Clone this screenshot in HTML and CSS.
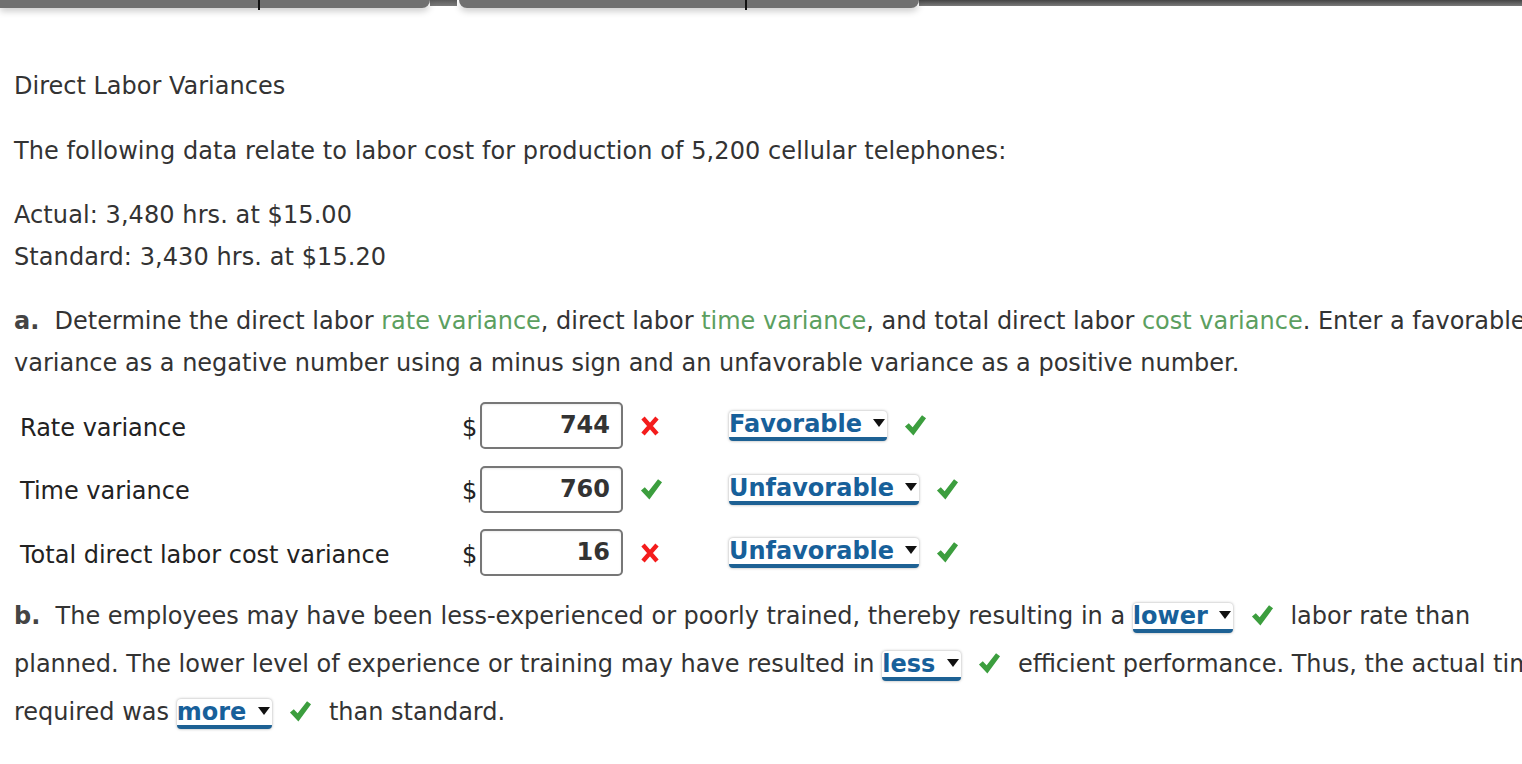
FILE: index.html
```html
<!DOCTYPE html>
<html>
<head>
<meta charset="utf-8">
<link rel="stylesheet" href="styles.css">
</head>
<body>
<div class="topbar">
  <div class="tab tab-first"><span class="tick tick-a"></span></div>
  <div class="joint"></div>
  <div class="tab tab-second"><span class="tick tick-b"></span></div>
  <div class="rail"></div>
</div>
<div class="content">
  <p class="title">Direct Labor Variances</p>
  <p class="para">The following data relate to labor cost for production of 5,200 cellular telephones:</p>
  <p class="para">Actual: 3,480 hrs. at $15.00<br>Standard: 3,430 hrs. at $15.20</p>
  <p class="para para-a"><b class="lead">a.</b>&nbsp; Determine the direct labor <span class="term">rate variance</span>, direct labor <span class="term">time variance</span>, and total direct labor <span class="term">cost variance</span>. Enter a favorable variance as a negative number using a minus sign and an unfavorable variance as a positive number.</p>

  <div class="answers">
    <div class="row">
      <div class="label">Rate variance</div>
      <div class="dollar">$</div>
      <div class="box">744</div>
      <div class="mark"><svg class="cross" viewBox="0 0 20 20"><path d="M3 2 L17 18 M17 2 L3 18"/></svg></div>
      <div class="sel-cell"><span class="select">Favorable <i class="arrow"></i></span></div>
      <div class="mark mark-after"><svg class="check" viewBox="0 0 24 24"><path d="M1 13 L5 9.6 L9 13.8 L18.8 1.2 L23 4.4 L9.8 22.4 Z"/></svg></div>
    </div>
    <div class="row">
      <div class="label">Time variance</div>
      <div class="dollar">$</div>
      <div class="box">760</div>
      <div class="mark"><svg class="check" viewBox="0 0 24 24"><path d="M1 13 L5 9.6 L9 13.8 L18.8 1.2 L23 4.4 L9.8 22.4 Z"/></svg></div>
      <div class="sel-cell"><span class="select">Unfavorable <i class="arrow"></i></span></div>
      <div class="mark mark-after"><svg class="check" viewBox="0 0 24 24"><path d="M1 13 L5 9.6 L9 13.8 L18.8 1.2 L23 4.4 L9.8 22.4 Z"/></svg></div>
    </div>
    <div class="row">
      <div class="label">Total direct labor cost variance</div>
      <div class="dollar">$</div>
      <div class="box">16</div>
      <div class="mark"><svg class="cross" viewBox="0 0 20 20"><path d="M3 2 L17 18 M17 2 L3 18"/></svg></div>
      <div class="sel-cell"><span class="select">Unfavorable <i class="arrow"></i></span></div>
      <div class="mark mark-after"><svg class="check" viewBox="0 0 24 24"><path d="M1 13 L5 9.6 L9 13.8 L18.8 1.2 L23 4.4 L9.8 22.4 Z"/></svg></div>
    </div>
  </div>

  <p class="para-b"><b class="lead">b.</b>&nbsp; The employees may have been less-experienced or poorly trained, thereby resulting in a <span class="select">lower <i class="arrow"></i></span> <svg class="check inline-check" viewBox="0 0 24 24"><path d="M1 13 L5 9.6 L9 13.8 L18.8 1.2 L23 4.4 L9.8 22.4 Z"/></svg> labor rate than planned. The lower level of experience or training may have resulted in <span class="select">less <i class="arrow"></i></span> <svg class="check inline-check" viewBox="0 0 24 24"><path d="M1 13 L5 9.6 L9 13.8 L18.8 1.2 L23 4.4 L9.8 22.4 Z"/></svg> efficient performance. Thus, the actual time required was <span class="select">more <i class="arrow"></i></span> <svg class="check inline-check" viewBox="0 0 24 24"><path d="M1 13 L5 9.6 L9 13.8 L18.8 1.2 L23 4.4 L9.8 22.4 Z"/></svg> than standard.</p>
</div>
</body>
</html>
```

FILE: styles.css
```css
html, body {
  margin: 0;
  padding: 0;
  overflow: hidden;
  background: #fff;
}

body {
  font-family: "DejaVu Sans", Verdana, sans-serif;
  font-size: 24px;
  color: #333;
}

.topbar {
  display: flex;
  align-items: flex-start;
  height: 10px;
  width: 1522px;
}

.tab {
  position: relative;
  height: 8px;
  background: #707070;
  box-shadow: 0 3px 7px rgba(0, 0, 0, 0.22);
}

.tab-first {
  width: 430px;
  border-bottom-right-radius: 9px;
}

.tab-second {
  width: 460px;
  margin-left: 2px;
  border-bottom-left-radius: 9px;
  border-bottom-right-radius: 9px;
}

.joint {
  width: 27px;
  height: 6px;
  background: linear-gradient(#5a5a5a, #7a7a7a);
}

.rail {
  flex: 1;
  height: 6px;
  background: linear-gradient(#444, #7a7a7a);
}

.tick {
  position: absolute;
  top: 0;
  width: 2px;
  height: 10px;
  background: #111;
}

.tick-a { left: 258px; }
.tick-b { left: 286px; }

.content {
  width: 1551px;
  padding: 55px 0 0 14px;
}

p {
  margin: 0;
}

.title {
  line-height: 42px;
  margin-bottom: 23px;
}

.para {
  line-height: 42px;
  margin-bottom: 22px;
  letter-spacing: 0.08px;
}

.para-a {
  margin-bottom: 10px;
  letter-spacing: 0;
}

.lead {
  font-weight: bold;
  color: #444;
}

.term {
  color: #5c9f60;
}

.answers {
  display: flex;
  flex-direction: column;
}

.row {
  display: flex;
  align-items: center;
  height: 63.5px;
  padding-left: 6px;
  color: #222;
}

.label {
  width: 442px;
  padding-top: 4px;
}

.dollar {
  width: 18px;
  padding-top: 4px;
}

.box {
  box-sizing: border-box;
  width: 143px;
  height: 47px;
  border: 2px solid #777;
  border-radius: 5px;
  text-align: right;
  font-weight: bold;
  line-height: 43px;
  padding-right: 11px;
  color: #333;
  box-shadow: inset 0 1px 2px rgba(0, 0, 0, 0.08);
}

.mark {
  width: 23px;
  margin-left: 17px;
  display: flex;
  align-items: center;
}

.mark-after {
  margin-left: 17px;
}

.sel-cell {
  margin-left: 66px;
}

.select {
  display: inline-block;
  font-weight: bold;
  color: #17609a;
  background: #fff;
  border-radius: 4px;
  box-shadow: 0 0 3px rgba(0, 0, 0, 0.35);
  border-bottom: 4px solid #1d6194;
  line-height: 26px;
  padding-right: 2px;
}

.arrow {
  display: inline-block;
  width: 0;
  height: 0;
  border-left: 6.5px solid transparent;
  border-right: 6.5px solid transparent;
  border-top: 8px solid #111;
  vertical-align: 5px;
  margin-left: 3px;
}

.cross {
  width: 20px;
  height: 20px;
  fill: none;
  stroke: #f41c1c;
  stroke-width: 4.4;
}

.check {
  width: 23px;
  height: 23px;
  fill: #3c9e3e;
}

.para-b {
  line-height: 48px;
  margin-top: 7px;
}

.inline-check {
  vertical-align: -3px;
  margin: 0 9px 0 10px;
}
```
